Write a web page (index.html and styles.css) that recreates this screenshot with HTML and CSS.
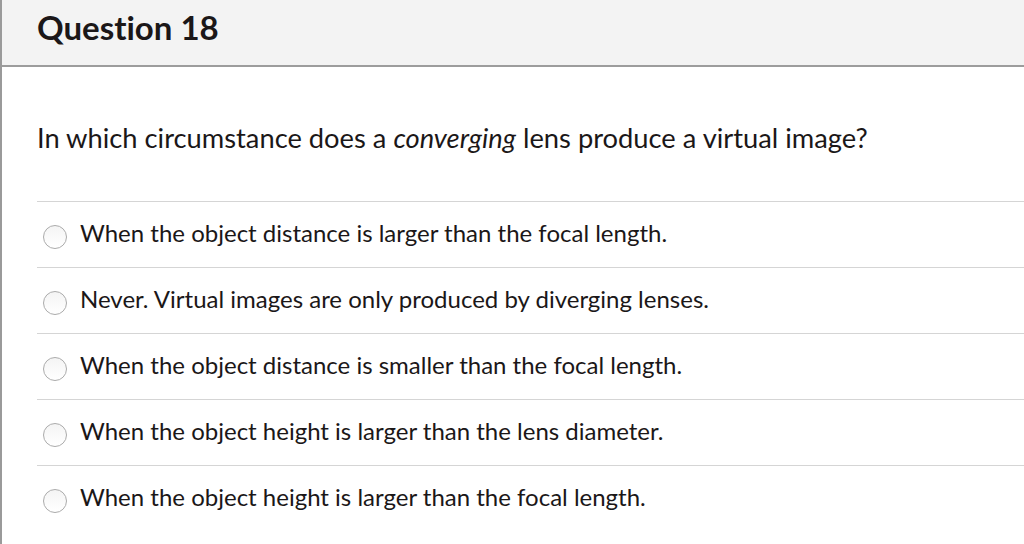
FILE: index.html
```
<!DOCTYPE html>
<html>
<head>
<meta charset="utf-8">
<link rel="stylesheet" href="styles.css">
</head>
<body>
<div class="quiz">
  <div class="header"><h1 class="title">Question 18</h1></div>
  <div class="content">
    <div class="question"><p class="question-text">In which circumstance does a <em>converging</em> lens produce a virtual image?</p></div>
    <ul class="answers">
      <li class="answer"><span class="radio"></span><span class="label">When the object distance is larger than the focal length.</span></li>
      <li class="answer"><span class="radio"></span><span class="label">Never. Virtual images are only produced by diverging lenses.</span></li>
      <li class="answer"><span class="radio"></span><span class="label">When the object distance is smaller than the focal length.</span></li>
      <li class="answer"><span class="radio"></span><span class="label">When the object height is larger than the lens diameter.</span></li>
      <li class="answer"><span class="radio"></span><span class="label">When the object height is larger than the focal length.</span></li>
    </ul>
  </div>
</div>
</body>
</html>
```
FILE: styles.css
```
html, body {
  margin: 0;
  padding: 0;
  background: #fff;
}
body {
  font-family: Lato, "Liberation Sans", sans-serif;
  font-variant-ligatures: none;
  color: #1b1718;
  width: 1024px;
  height: 544px;
  overflow: hidden;
}
.quiz {
  border-left: 2px solid #9a9a9a;
  height: 544px;
  box-sizing: border-box;
}
.header {
  height: 65px;
  background: #f3f3f3;
  border-bottom: 2px solid #9c9c9c;
  display: flex;
  align-items: center;
  padding-left: 35px;
}
.title {
  margin: 0;
  font-size: 33px;
  font-weight: 700;
  line-height: 1;
  position: relative;
  top: -5px;
}
.content {
  padding-left: 35px;
}
.question {
  height: 134px;
  display: flex;
  align-items: center;
  padding-top: 8px;
  box-sizing: border-box;
}
.question-text {
  margin: 0;
  font-size: 27.3px;
  line-height: 1;
}
.answers {
  list-style: none;
  margin: 0;
  padding: 0;
}
.answer {
  height: 66px;
  border-top: 1px solid #d5d5d5;
  box-sizing: border-box;
  display: flex;
  align-items: center;
  font-size: 24px;
}
.radio {
  width: 24px;
  height: 24px;
  border: 1px solid #ababab;
  border-radius: 50%;
  box-sizing: border-box;
  margin-left: 6px;
  margin-right: 13px;
  flex: none;
  background: linear-gradient(#f4f4f4, #ffffff);
  position: relative;
  top: 2px;
}
.label {
  line-height: 1;
  position: relative;
  top: -2px;
}
```
